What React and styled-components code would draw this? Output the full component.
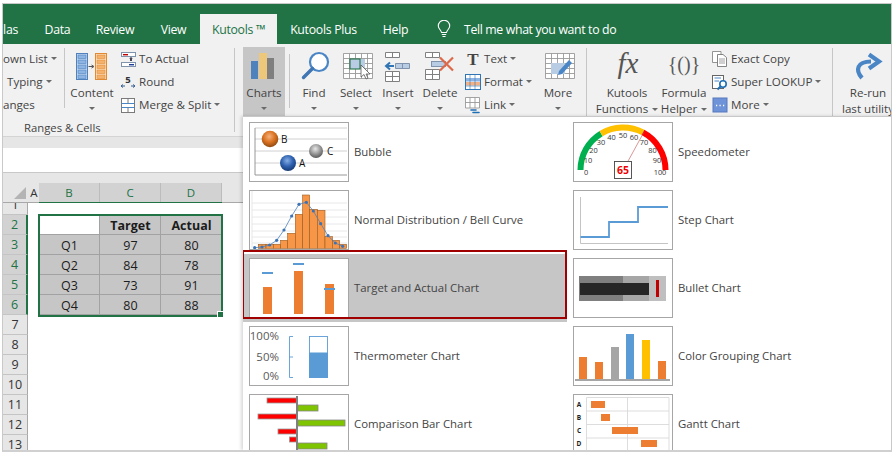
import React from "react";
import styled, { createGlobalStyle } from "styled-components";

const Global = createGlobalStyle`
  html, body { margin: 0; padding: 0; background: #fff; }
  body { font-family: "Open Sans", "Noto Sans", sans-serif; }
`;

const Page = styled.div`
  width: 896px; height: 456px; padding: 3px 2px 4px; box-sizing: border-box; background: #fff; overflow: hidden;
`;
const Frame = styled.div`
  position: relative; width: 890px; height: 449px; box-sizing: border-box; border: 1px solid #c9c9c9;
  border-bottom: 2px solid #d0d0d0; overflow: hidden; background: #fff; display: flex; flex-direction: column;
`;
const TabBar = styled.div`
  height: 40px; flex: none; background: #217346; display: flex; align-items: flex-end;
`;
const Tab = styled.div`
  width: ${p => p.$w}px; height: 30px; flex: none; display: flex; align-items: center; justify-content: center;
  font-size: 12.3px; letter-spacing: -0.3px; color: ${p => (p.$active ? "#217346" : "#fff")}; background: ${p => (p.$active ? "#f1f1f1" : "transparent")};
`;
const ClippedTab = styled(Tab)`
  justify-content: flex-end; padding-right: 14px; box-sizing: border-box;
`;
const TellMe = styled.div`
  height: 30px; margin-left: 16px; display: flex; align-items: center; gap: 13px; font-size: 12.3px; letter-spacing: -0.35px; color: #fff;
`;
const Ribbon = styled.div`
  height: 92px; flex: none; background: #f1f1f1; display: flex; font-size: 11.6px; color: #444;
`;
const Sep = styled.div`
  width: 1px; flex: none; align-self: flex-start; background: #c6c6c6;
  margin: ${p => p.$top}px ${p => p.$r || 0}px 0 ${p => p.$l || 0}px; height: ${p => p.$h}px;
`;
const SmallColumn = styled.div`
  width: ${p => p.$w}px; flex: none; display: flex; flex-direction: column; padding-top: 3px; margin-left: ${p => p.$l || 0}px; overflow: hidden;
`;
const SmallRow = styled.div`
  height: 23px; display: flex; align-items: center; white-space: nowrap; padding-left: ${p => p.$indent || 0}px; gap: 3px;
`;
const SmallIcon = styled.svg`
  width: 18px; height: 18px; flex: none; margin-right: -1px;
`;
const BigButton = styled.div`
  width: ${p => p.$w}px; flex: none; height: 69px; display: flex; flex-direction: column; align-items: center;
  margin-top: 3px; margin-left: ${p => p.$l || 0}px; padding-top: 3px; box-sizing: border-box; white-space: nowrap;
  background: ${p => (p.$on ? "#c6c6c6" : "transparent")};
`;
const BigIcon = styled.svg`
  width: 40px; height: 34px; flex: none; margin-bottom: 1px; overflow: visible;
`;
const BtnLine = styled.div`
  height: 16px; line-height: 16px; display: flex; align-items: center; gap: 4px;
`;
const Caret = styled.span`
  display: inline-block; width: 0; height: 0; border-left: 3px solid transparent; border-right: 3px solid transparent;
  border-top: 3px solid #6a6a6a; flex: none;
`;
const RangesGroup = styled.div`
  width: 165px; flex: none; display: flex; flex-wrap: wrap; align-content: flex-start;
`;
const GroupName = styled.div`
  width: 100%; height: 20px; line-height: 20px; margin: 2px 0 0 -41px; font-size: 11.3px; flex: none;
`;
const Band = styled.div`
  height: 12px; flex: none; background: #e6e6e6; border-top: 1px solid #d4d4d4; box-sizing: border-box;
`;
const FormulaBar = styled.div`
  height: 24px; flex: none; background: #fff;
`;
const ColHeads = styled.div`
  height: 31px; flex: none; box-sizing: border-box; background: #e6e6e6; border-top: 1px solid #c8c8c8; border-bottom: 1px solid #a8a8a8;
  display: grid; grid-template-columns: 26px 10px 61px 61px 61px; align-items: end;
`;
const Corner = styled.div`
  width: 0; height: 0; justify-self: end; margin: 0 3px 3px 0; border-left: 12px solid transparent; border-bottom: 12px solid #b4b4b4;
`;
const ColHead = styled.div`
  height: 19px; line-height: 19px; text-align: center; font-size: 11.5px; box-sizing: border-box;
  color: ${p => (p.$sel ? "#217346" : "#333")};
  background: ${p => (p.$sel ? "#d2d2d2" : "#e6e6e6")};
  border-right: ${p => (p.$sel ? "1px solid #bcbcbc" : "0")};
  box-shadow: ${p => (p.$sel ? "0 1px 0 #217346" : "none")};
`;
const Grid = styled.div`
  position: relative; flex: 1; overflow: hidden;
`;
const SheetRow = styled.div`
  height: ${p => p.$h || 20}px; display: grid; grid-template-columns: 25px 11px 61px 61px 61px; grid-template-rows: ${p => p.$h || 20}px;
`;
const RowHead = styled.div`
  background: ${p => (p.$sel ? "#d2d2d2" : "#e6e6e6")}; color: ${p => (p.$sel ? "#217346" : "#333")};
  box-sizing: border-box; border-bottom: 1px solid #c4c4c4;
  border-right: ${p => (p.$sel ? "2px solid #217346" : "1px solid #a8a8a8")};
  font-size: 12.5px; display: flex; align-items: flex-end; justify-content: center; line-height: 18px; overflow: hidden;
`;
const Cell = styled.div`
  background: ${p => (p.$blank ? "#fff" : "#c6c6c6")}; box-sizing: border-box; padding: 2px 0 0 1px; line-height: 16px; min-height: 0;
  border-right: 1px solid #a2a2a2; border-bottom: 1px solid #a2a2a2;
  font-size: 12.5px; font-weight: ${p => (p.$bold ? 700 : 400)}; color: #1c1c1c;
  display: flex; align-items: center; justify-content: center;
`;
const Selection = styled.div`
  position: absolute; left: 35px; top: 11px; width: 185px; height: 103px; box-sizing: border-box; border: 2px solid #217346;
`;
const Handle = styled.div`
  position: absolute; right: -3px; bottom: -3px; width: 5px; height: 5px; background: #217346; border: 1px solid #fff;
`;
const Menu = styled.div`
  position: absolute; left: 240px; top: 112px; right: 0; bottom: 0; background: #fff; box-shadow: -2px 0 3px rgba(0,0,0,.15);
  border-top: 1px solid #c8c8c8;
  display: grid; grid-template-columns: 324px 324px; grid-auto-rows: 68px; padding-top: 1px; box-sizing: border-box; overflow: hidden;
`;
const MenuItem = styled.div`
  display: flex; align-items: flex-start; gap: 5px; padding: 4px 6px; background: ${p => (p.$on ? "#c6c6c6" : "transparent")};
`;
const Thumb = styled.div`
  width: 100px; height: 60px; flex: none; box-sizing: border-box; border: 1px solid #a6a6a6; background: #fff; display: flex;
`;
const ThumbSvg = styled.svg`
  width: 98px; height: 58px; display: block;
`;
const ItemLabel = styled.div`
  height: 60px; line-height: 59px; font-size: 11.4px; color: #444; white-space: nowrap;
`;
const RedBox = styled.div`
  position: absolute; left: -1px; top: 133px; width: 325px; height: 69px; box-sizing: border-box; border: 2px solid #a00000; pointer-events: none;
`;

const O = "#ed7d31", B = "#5b9bd5", IB = "#4f81bd";

const Svg = ({ children }) => <ThumbSvg viewBox="1 1 98 58">{children}</ThumbSvg>;

function Sphere({ cx, cy, r, id, c1, c2, c3 }) {
  return (
    <>
      <defs>
        <radialGradient id={id} cx="45%" cy="35%" r="65%">
          <stop offset="0" stopColor={c1} /><stop offset=".55" stopColor={c2} /><stop offset="1" stopColor={c3} />
        </radialGradient>
      </defs>
      <circle cx={cx} cy={cy} r={r} fill={`url(#${id})`} />
    </>
  );
}
const Bubble = () => (
  <Svg>
    {[6, 17, 29, 41].map(y => <line key={y} x1="6" x2="98" y1={y} y2={y} stroke="#c4c4c4" strokeWidth=".8" />)}
    <path d="M6 6V53H98" fill="none" stroke="#8c8c8c" strokeWidth=".9" />
    <Sphere id="sa" cx={21} cy={17} r={8.3} c1="#f5b27c" c2="#d9701f" c3="#8e4a12" />
    <Sphere id="sb" cx={67} cy={29} r={7} c1="#e8e8e8" c2="#9a9a9a" c3="#5a5a5a" />
    <Sphere id="sc" cx={39} cy={41} r={8} c1="#86aee6" c2="#2f62b0" c3="#173a75" />
    <g fontSize="10" fill="#111" fontFamily="Open Sans">
      <text x="32" y="21">B</text><text x="78" y="33">C</text><text x="50" y="45">A</text>
    </g>
  </Svg>
);
const barTops = [388, 388, 388, 376, 355, 298, 240, 283, 286, 365, 376, 388];
const barXs = [55, 78, 100, 122, 143, 166, 188, 209, 232, 255, 277, 299, 320];
const curve = [[44, 398], [66, 396], [89, 390], [110, 376], [132, 345], [155, 303], [177, 268], [199, 262], [220, 288], [242, 326], [264, 362], [286, 384], [308, 394]];
const Normal = () => (
  <Svg>
    <line x1="3" y1="1" x2="3" y2="58" stroke="#ddd" strokeWidth=".7" />
    {[13, 20, 27, 34, 41, 47, 53].map(y => <line key={y} x1="3" x2="98" y1={y} y2={y} stroke="#e2e2e2" strokeWidth=".8" />)}
    {barTops.map((t, i) => (
      <rect key={i} x={barXs[i] / 3 - 9} y={t / 3 - 75} width={(barXs[i + 1] - barXs[i]) / 3} height={(400 - t) / 3}
        fill="#f79646" stroke="#9c5a1e" strokeWidth=".6" />
    ))}
    <polyline points={curve.map(([x, y]) => `${x / 3 - 9},${y / 3 - 75}`).join(" ")} fill="none" stroke={IB} strokeWidth=".8" />
    {curve.map(([x, y], i) => <circle key={i} cx={x / 3 - 9} cy={y / 3 - 75} r="1.6" fill="#3d72b5" />)}
  </Svg>
);
const TargetChart = () => (
  <Svg>
    {[[69, 111, 66, 69], [162, 63, 159, 42], [255, 102, 252, 117]].map(([x, t, lx, ly]) => (
      <g key={x}>
        <rect x={x / 3 - 9} y={t / 3 - 8} width="9" height={(192 - t) / 3} fill={O} />
        <rect x={lx / 3 - 9} y={ly / 3 - 9} width="11" height="2" fill={B} />
      </g>
    ))}
  </Svg>
);
const Thermo = () => (
  <Svg>
    <g fontSize="11.5" fill="#595959" textAnchor="end" fontFamily="Open Sans">
      <text x="30" y="14">100%</text><text x="30" y="35">50%</text><text x="30" y="54">0%</text>
    </g>
    <path d="M44 10.5H40.5V51.5H44M40.5 31H44" fill="none" stroke={B} strokeWidth=".9" />
    <rect x="60.5" y="10.5" width="18" height="41" fill="#fff" stroke={B} strokeWidth=".9" />
    <rect x="60" y="26.5" width="19" height="25.5" fill={B} />
  </Svg>
);
const Compare = () => (
  <Svg>
    {[[18, 4, 29.3], [9, 20, 38.6], [29, 35, 18.3], [40.5, 43, 6.8]].map(([x, y, w]) => (
      <rect key={y} x={x} y={y} width={w} height="5" fill="#f00" stroke="#999" strokeWidth=".8" />
    ))}
    {[[11, 20], [26, 47], [49, 29]].map(([y, w]) => (
      <rect key={y} x="49" y={y} width={w} height="6" fill="#7fc400" stroke="#888" strokeWidth=".8" />
    ))}
    <rect x="47" y="2" width="2" height="58" fill="#808080" />
  </Svg>
);
const gx = (a, r) => 50 + r * Math.cos((a * Math.PI) / 180);
const gy = (a, r) => 48 - r * Math.sin((a * Math.PI) / 180);
const arc = (a, b, r = 42.5) => `M${gx(a, r)} ${gy(a, r)}A${r} ${r} 0 0 1 ${gx(b, r)} ${gy(b, r)}`;
const gaugeLabels = [[0, 13, 50], [10, 15, 38.5], [20, 20.5, 28], [30, 28, 20], [40, 38.5, 15], [50, 50, 13], [60, 61, 15], [70, 71, 20.5], [80, 79.5, 28], [90, 84, 38], [100, 87, 50]];
const Speedo = () => (
  <Svg>
    <path d={arc(180, 121)} fill="none" stroke="#00b050" strokeWidth="6" />
    <path d={arc(121, 62)} fill="none" stroke="#ffc000" strokeWidth="6" />
    <path d={arc(62, 0)} fill="none" stroke="#f00" strokeWidth="6" />
    <line x1="54" y1="41" x2="71" y2="10" stroke="#c0504d" strokeWidth=".6" />
    <g fontSize="7.4" fill="#333" textAnchor="middle" fontFamily="Open Sans">
      {gaugeLabels.map(([t, x, y]) => <text key={t} x={x} y={y + 2.6}>{t}</text>)}
    </g>
    <rect x="41.5" y="39.5" width="17" height="17" fill="#fff" stroke="#444" strokeWidth=".9" />
    <text x="50" y="52" fontSize="10.5" fontWeight="700" fill="#e00" textAnchor="middle" fontFamily="Open Sans">65</text>
  </Svg>
);
const Step = () => (
  <Svg>
    <path d="M7.5 7V53.5H95" fill="none" stroke="#bdbdbd" strokeWidth=".9" />
    <path d="M7.5 47H36V32H65V17H95" fill="none" stroke={B} strokeWidth="1.8" />
  </Svg>
);
const Bullet = () => (
  <Svg>
    <rect x="6" y="18" width="44" height="25" fill="#7f7f7f" />
    <rect x="50" y="18" width="26" height="25" fill="#a6a6a6" />
    <rect x="76" y="18" width="17" height="25" fill="#bfbfbf" />
    <rect x="7" y="25" width="69" height="12" fill="#262626" />
    <rect x="83" y="22" width="3" height="17" fill="#c00000" />
  </Svg>
);
const ColorGroup = () => (
  <Svg>
    {[[42, 321, O], [90, 336, O], [138, 291, "#a5a5a5"], [183, 252, B], [231, 270, "#ffc000"], [279, 333, O]].map(([x, t, c]) => (
      <rect key={x} x={x / 3 - 8} y={t / 3 - 76} width="8" height={(387 - t) / 3} fill={c} />
    ))}
    <rect x="2" y="53" width="95" height="2" fill="#a6a6a6" />
  </Svg>
);
const Gantt = () => (
  <Svg>
    <path d="M13.5 3.5H96V60M13.5 3.5V60M54.5 3.5V60M13.5 17H96M13.5 30.5H96M13.5 44H96M13.5 57H96" fill="none" stroke="#d9d9d9" strokeWidth=".9" />
    {[[18, 7, 14], [28, 20, 9], [39, 33, 26], [68, 46, 16]].map(([x, y, w]) => <rect key={y} x={x} y={y} width={w} height="7" fill={O} />)}
    <g fontSize="6.5" fontWeight="700" fill="#222" textAnchor="middle" fontFamily="Open Sans">
      <text x="6" y="13">A</text><text x="6" y="26">B</text><text x="6" y="39">C</text><text x="6" y="52">D</text>
    </g>
  </Svg>
);

const items = [
  ["Bubble", Bubble], ["Speedometer", Speedo],
  ["Normal Distribution / Bell Curve", Normal], ["Step Chart", Step],
  ["Target and Actual Chart", TargetChart, true], ["Bullet Chart", Bullet],
  ["Thermometer Chart", Thermo], ["Color Grouping Chart", ColorGroup],
  ["Comparison Bar Chart", Compare], ["Gantt Chart", Gantt],
];

const stripes = (x, y, c, f) => [0, 1, 2, 3, 4].map(i => (
  <rect key={i} x={x + 1.5} y={y + 1.5 + i * 5} width="8" height="3.4" fill={f} stroke={c} strokeWidth=".6" />
));
const ContentIcon = () => (
  <BigIcon viewBox="0 0 40 34">
    <rect x="4.5" y="3.5" width="11" height="26" fill="#c6d9f1" stroke="#4f81bd" />
    {stripes(4.5, 3.5, "#4f81bd", "#8db4e2")}
    <rect x="23.5" y="3.5" width="11" height="26" fill="#fde3c4" stroke="#e08a34" />
    {stripes(23.5, 3.5, "#e08a34", "#f6b26b")}
    <path d="M16.5 16.5H21M19.5 15L22 16.5L19.5 18" fill="none" stroke="#555" />
  </BigIcon>
);
const ChartsIcon = () => (
  <BigIcon viewBox="0 0 40 34">
    <rect x="7" y="11" width="7" height="18" fill="#4f81bd" />
    <rect x="15" y="3" width="8" height="26" fill="#eec87a" />
    <rect x="23" y="8" width="7" height="21" fill="#7f7f7f" />
  </BigIcon>
);
const FindIcon = () => (
  <BigIcon viewBox="0 0 40 34">
    <circle cx="25" cy="12" r="9" fill="#fff" stroke="#4a86c5" strokeWidth="2.2" />
    <path d="M18.5 18.5L9.5 27.5" stroke="#3f76b3" strokeWidth="3.4" strokeLinecap="round" />
  </BigIcon>
);
const gridLines = "M7.5 3.5H36.5V28.5H7.5ZM7.5 8.5H36.5M7.5 13.5H36.5M7.5 18.5H36.5M7.5 23.5H36.5M13.5 3.5V28.5M19.5 3.5V28.5M25.5 3.5V28.5M31.5 3.5V28.5";
const SelectIcon = () => (
  <BigIcon viewBox="0 0 40 34">
    <path d={gridLines} fill="#fff" stroke="#999" strokeWidth=".9" />
    <rect x="14" y="9" width="15" height="10" fill="#b8cce4" />
    <rect x="14" y="9" width="10" height="10" fill="#b8cce4" stroke="#217346" strokeWidth="1.1" />
    <path d="M25 15V27L28 24.5L30 29L32 28L30 24H34Z" fill="#fff" stroke="#555" strokeWidth=".8" />
  </BigIcon>
);
const InsertIcon = () => (
  <BigIcon viewBox="0 0 40 34">
    <g fill="#fff" stroke="#808080">
      <path d="M7.5 2.5H21.5V7.5H7.5ZM14.5 2.5V7.5" />
      <path d="M7.5 21.5H21.5V31.5H7.5ZM14.5 21.5V31.5M7.5 26.5H21.5" />
    </g>
    <path d="M17.5 13.5H31.5V18.5H17.5ZM24.5 13.5V18.5" fill="#b8cce4" stroke="#7f93ad" />
    <path d="M16 16H9M12 12.5L8 16L12 19.5" fill="none" stroke="#2f75b5" strokeWidth="2" />
  </BigIcon>
);
const DeleteIcon = () => (
  <BigIcon viewBox="0 0 40 34">
    <g fill="#fff" stroke="#808080">
      <path d="M5.5 2.5H19.5V7.5H5.5ZM12.5 2.5V7.5" />
      <path d="M5.5 19.5H19.5V29.5H5.5ZM12.5 19.5V29.5M5.5 24.5H19.5" />
    </g>
    <rect x="11.5" y="11.5" width="14" height="5" fill="#b8cce4" stroke="#7f93ad" />
    <path d="M20 7.5L33 20.5M33 7.5L20 20.5" stroke="#dc6a4a" strokeWidth="2.2" />
  </BigIcon>
);
const MoreIcon = () => (
  <BigIcon viewBox="0 0 40 34">
    <path d={gridLines} fill="#fff" stroke="#999" strokeWidth=".9" />
    <rect x="13" y="13" width="14" height="11" fill="#b8cce4" />
    <path d="M21 21L31 10L34 13L24 24L20 25Z" fill="#4a86c5" />
  </BigIcon>
);
const FxIcon = () => (
  <BigIcon viewBox="0 0 40 34">
    <text x="21" y="23" textAnchor="middle" fontFamily="Liberation Serif" fontStyle="italic" fontSize="29" fill="#555">fx</text>
  </BigIcon>
);
const BraceIcon = () => (
  <BigIcon viewBox="0 0 40 34">
    <text x="20" y="21" textAnchor="middle" fontFamily="Liberation Serif" fontSize="20" fill="#595959">{"{()}"}</text>
  </BigIcon>
);
const RerunIcon = () => (
  <BigIcon viewBox="0 0 40 34">
    <path d="M14 28C7 20 9 11.5 23 11.5" fill="none" stroke="#4a86c5" strokeWidth="4.2" />
    <path d="M21 4.5L31 11.5L21 18.5" fill="none" stroke="#4a86c5" strokeWidth="4.2" />
  </BigIcon>
);
const I = ({ children }) => <SmallIcon viewBox="0 0 18 18">{children}</SmallIcon>;
const ToActual = () => (
  <I>
    <rect x="2.5" y="2.5" width="14" height="4" fill="#fff" stroke="#7f93ad" /><rect x="4" y="4" width="5" height="1.4" fill="#c00000" />
    <rect x="2.5" y="12.5" width="14" height="4" fill="#fff" stroke="#7f93ad" /><rect x="10" y="14" width="5" height="1.4" fill="#1f3d99" />
    <path d="M11 8H13V11H11ZM10 8.5L12 7L14 8.5" fill="#445" />
  </I>
);
const RoundI = () => (
  <I>
    <text x="9" y="10" fontSize="9.5" fontWeight="700" textAnchor="middle" fill="#333" fontFamily="Open Sans">5</text>
    <path d="M2 13H6M2 13L4 11.5M2 13L4 14.5M16 13H12M16 13L14 11.5M16 13L14 14.5" fill="none" stroke="#355f91" strokeWidth="1" />
  </I>
);
const MergeI = () => (
  <I>
    <rect x="2.5" y="2.5" width="13" height="14" fill="#fff" stroke="#7a7a7a" />
    <path d="M2.5 7.5H15.5M2.5 11.5H15.5" stroke="#4a86c5" strokeWidth="1" />
    <path d="M9 2.5V7.5M9 11.5V16.5" stroke="#7a7a7a" />
  </I>
);
const TextI = () => (
  <I><text x="9" y="15" fontSize="17" fontWeight="700" textAnchor="middle" fontFamily="Liberation Serif" fill="#444">T</text></I>
);
const FormatI = () => (
  <I>
    <rect x="1.5" y="1.5" width="15" height="15" fill="#fff" stroke="#2f75b5" />
    <rect x="2" y="5" width="14" height="3.5" fill="#8eb4e3" /><rect x="2" y="9" width="14" height="3.5" fill="#f4b183" />
    <path d="M6 2V16M11 2V16M2 13H16" stroke="#2f75b5" strokeWidth=".6" />
  </I>
);
const LinkI = () => (
  <I>
    <path d="M1.5 1.5H15.5V12H1.5ZM1.5 6.5H15.5M6 1.5V12M11 1.5V12" fill="#fff" stroke="#999" strokeWidth=".9" />
    <path d="M7 14H12M9 16.5H15" stroke="#1f6fb5" strokeWidth="1.6" strokeLinecap="round" />
  </I>
);
const CopyI = () => (
  <I>
    <path d="M1.5 1.5H10V12.5H1.5Z" fill="#fff" stroke="#888" strokeWidth=".9" />
    <path d="M6.5 4.5H12L15.5 7.5V16.5H6.5Z" fill="#fff" stroke="#777" strokeWidth=".9" />
    <path d="M8 9H14M8 11H14M8 13H14" stroke="#888" strokeWidth=".8" />
  </I>
);
const LookupI = () => (
  <I>
    <rect x="1.5" y="2.5" width="11" height="13" fill="#fff" stroke="#666" />
    <path d="M3.5 5H10M3.5 8H8" stroke="#4a86c5" />
    <circle cx="12" cy="11" r="3.2" fill="#fff" stroke="#1f6fb5" strokeWidth="1.6" />
    <path d="M9.8 13.3L6.5 16.5" stroke="#1f6fb5" strokeWidth="2" />
  </I>
);
const MoreI = () => (
  <I>
    <rect x="2" y="2" width="14" height="14" fill="#6f93d8" stroke="#5679bd" />
    <path d="M5 9.5H6.2M8.5 9.5H9.7M12 9.5H13.2" stroke="#fff" strokeWidth="1.4" />
  </I>
);
const Bulb = () => (
  <svg width="14" height="18" viewBox="0 0 14 18">
    <path d="M4.5 12.5C4 9.8 1.3 8.8 1.3 6A5.7 5.7 0 0 1 12.7 6C12.7 8.8 10 9.8 9.5 12.5ZM4.8 14.5H9.2M5.5 16.5H8.5" fill="none" stroke="#fff" strokeWidth="1.1" />
  </svg>
);

const Big = ({ w, l, icon: Ic, a, b, on }) => (
  <BigButton $w={w} $l={l} $on={on}>
    <Ic />
    <BtnLine>{a}</BtnLine>
    <BtnLine>{b}{b ? " " : ""}<Caret /></BtnLine>
  </BigButton>
);

const rows = [
  [1, 12], [2, 20, ["", "Target", "Actual"]], [3, 20, ["Q1", "97", "80"]], [4, 20, ["Q2", "84", "78"]],
  [5, 20, ["Q3", "73", "91"]], [6, 20, ["Q4", "80", "88"]], [7], [8], [9], [10], [11], [12], [13],
];

export default function App() {
  return (
    <Page>
      <Global />
      <Frame>
        <TabBar>
          <ClippedTab $w={29}>las</ClippedTab>
          <Tab $w={51}>Data</Tab>
          <Tab $w={64}>Review</Tab>
          <Tab $w={53}>View</Tab>
          <Tab $w={77} $active>Kutools ™</Tab>
          <Tab $w={93}>Kutools Plus</Tab>
          <Tab $w={51}>Help</Tab>
          <TellMe><Bulb />Tell me what you want to do</TellMe>
        </TabBar>
        <Ribbon>
          <SmallColumn $w={61}>
            <SmallRow>own List <Caret /></SmallRow>
            <SmallRow $indent={4}>Typing <Caret /></SmallRow>
            <SmallRow>anges</SmallRow>
          </SmallColumn>
          <Sep $top={4} $h={60} />
          <RangesGroup>
            <Big w={46} l={4} icon={ContentIcon} a="Content" />
            <SmallColumn $w={115}>
              <SmallRow $indent={4}><ToActual />To Actual</SmallRow>
              <SmallRow $indent={4}><RoundI />Round</SmallRow>
              <SmallRow $indent={4}><MergeI />Merge &amp; Split <Caret /></SmallRow>
            </SmallColumn>
            <GroupName>Ranges &amp; Cells</GroupName>
          </RangesGroup>
          <Sep $top={4} $h={84} $l={4} />
          <Big w={42} l={8} icon={ChartsIcon} a="Charts" on />
          <Sep $top={10} $h={54} $l={4} />
          <Big w={42} l={3} icon={FindIcon} a="Find" />
          <Big w={42} icon={SelectIcon} a="Select" />
          <Big w={42} icon={InsertIcon} a="Insert" />
          <Big w={42} icon={DeleteIcon} a="Delete" />
          <SmallColumn $w={74} $l={2}>
            <SmallRow $indent={1}><TextI />Text <Caret /></SmallRow>
            <SmallRow $indent={1}><FormatI />Format <Caret /></SmallRow>
            <SmallRow $indent={1}><LinkI />Link <Caret /></SmallRow>
          </SmallColumn>
          <Big w={42} icon={MoreIcon} a="More" />
          <Sep $top={4} $h={68} $l={7} />
          <Big w={62} l={9} icon={FxIcon} a="Kutools" b="Functions" />
          <Big w={52} icon={BraceIcon} a="Formula" b="Helper" />
          <SmallColumn $w={122}>
            <SmallRow $indent={1}><CopyI />Exact Copy</SmallRow>
            <SmallRow $indent={1}><LookupI />Super LOOKUP <Caret /></SmallRow>
            <SmallRow $indent={1}><MoreI />More <Caret /></SmallRow>
          </SmallColumn>
          <Sep $top={4} $h={68} />
          <BigButton $w={70}>
            <RerunIcon />
            <BtnLine>Re-run</BtnLine>
            <BtnLine>last utility</BtnLine>
          </BigButton>
        </Ribbon>
        <Band />
        <FormulaBar />
        <ColHeads>
          <Corner />
          <ColHead>A</ColHead>
          <ColHead $sel>B</ColHead>
          <ColHead $sel>C</ColHead>
          <ColHead $sel>D</ColHead>
        </ColHeads>
        <Grid>
          {rows.map(([n, h, vals]) => (
            <SheetRow key={n} $h={h}>
              <RowHead $sel={n >= 2 && n <= 6}>{n}</RowHead>
              <span />
              {vals && vals.map((v, i) => (
                <Cell key={i} $blank={n === 2 && i === 0} $bold={n === 2}>{v}</Cell>
              ))}
            </SheetRow>
          ))}
          <Selection><Handle /></Selection>
        </Grid>
        <Menu>
          {items.map(([label, C, on]) => (
            <MenuItem key={label} $on={on}>
              <Thumb><C /></Thumb>
              <ItemLabel>{label}</ItemLabel>
            </MenuItem>
          ))}
          <RedBox />
        </Menu>
      </Frame>
    </Page>
  );
}
